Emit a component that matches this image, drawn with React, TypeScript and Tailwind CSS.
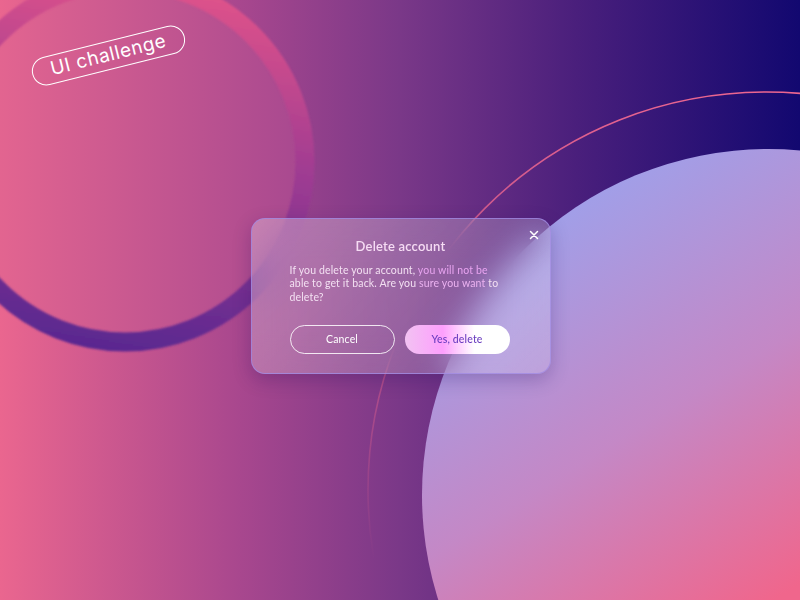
import React from "react";

function Backdrop() {
  return (
    <svg
      className="absolute inset-0"
      width={800}
      height={600}
      viewBox="0 0 800 600"
      fill="none"
    >
      <defs>
        <linearGradient id="leftFill" x1="-60" y1="0" x2="310" y2="0" gradientUnits="userSpaceOnUse">
          <stop offset="0" stopColor="#ee6a90" />
          <stop offset="1" stopColor="#a64890" />
        </linearGradient>
        <linearGradient id="leftRing" x1="180" y1="-20" x2="120" y2="350" gradientUnits="userSpaceOnUse">
          <stop offset="0" stopColor="#e2548a" />
          <stop offset="0.45" stopColor="#a03c92" />
          <stop offset="1" stopColor="#5a2890" />
        </linearGradient>
        <linearGradient id="bigFill" x1="560" y1="220" x2="790" y2="590" gradientUnits="userSpaceOnUse">
          <stop offset="0" stopColor="#a29ee7" />
          <stop offset="0.5" stopColor="#c488c6" />
          <stop offset="1" stopColor="#f0668c" />
        </linearGradient>
        <linearGradient id="thinArc" x1="0" y1="90" x2="0" y2="560" gradientUnits="userSpaceOnUse">
          <stop offset="0" stopColor="#ec6690" stopOpacity="1" />
          <stop offset="0.55" stopColor="#e8628c" stopOpacity="0.55" />
          <stop offset="1" stopColor="#e8628c" stopOpacity="0" />
        </linearGradient>
        <filter id="softEdge" x="-10%" y="-10%" width="120%" height="120%">
          <feGaussianBlur stdDeviation="1.2" />
        </filter>
      </defs>

      {/* left disc with its ring */}
      <circle cx={125} cy={162} r={172} fill="url(#leftFill)" />
      <circle
        cx={125}
        cy={162}
        r={180}
        stroke="url(#leftRing)"
        strokeWidth={19}
        filter="url(#softEdge)"
      />

      {/* thin outer arc */}
      <circle cx={766} cy={490} r={398} stroke="url(#thinArc)" strokeWidth={1.6} />

      {/* big right disc */}
      <circle cx={768} cy={495} r={346} fill="url(#bigFill)" />
    </svg>
  );
}

function CloseIcon() {
  return (
    <svg width="10" height="10" viewBox="0 0 10 10" fill="none">
      <path d="M1.5 1.5 L8.5 8.5 M8.5 1.5 L1.5 8.5" stroke="#ffffff" strokeWidth="1.5" strokeLinecap="round" />
    </svg>
  );
}

export default function App() {
  return (
    <div
      className="relative w-[800px] h-[600px] overflow-hidden bg-[linear-gradient(90deg,#ea668f_0%,#a8478e_30%,#7a3888_50%,#4a1f7c_72%,#120870_100%)]"
      style={{ fontFamily: "Lato, 'Open Sans', sans-serif" }}
    >
      <Backdrop />

      {/* tag in the upper corner */}
      <div className="absolute left-[30px] top-[41px] w-[157px] h-[29px] rotate-[-14deg] rounded-full border-[1.5px] border-white flex items-center justify-center">
        <span
          className="text-white text-[19px] leading-none tracking-[0.6px] pb-[2px]"
          style={{ fontFamily: "Inter, 'Liberation Sans', sans-serif" }}
        >
          UI challenge
        </span>
      </div>

      {/* dialog */}
      <div className="relative w-full h-full flex items-center justify-center pb-[9px] pl-[1px]">
        <div className="relative w-[300px] h-[156px] rounded-[14px] border border-[#a08ae2]/80 bg-[linear-gradient(135deg,rgba(255,255,255,0.30),rgba(255,255,255,0.14))] backdrop-blur-[18px] shadow-[0_6px_18px_rgba(40,10,90,0.25)] flex flex-col items-center pt-[19px] px-[38px]">
          <button className="absolute right-[11px] top-[11px] w-[10px] h-[10px] flex items-center justify-center">
            <CloseIcon />
          </button>

          <h2 className="text-[13px] leading-[16px] font-semibold text-[#f6dcf4] tracking-[0.2px]">
            Delete account
          </h2>

          <p className="self-stretch mt-[10px] text-[10.5px] leading-[13.5px] tracking-[0.15px] text-[#f3e0f2] whitespace-nowrap">
            If you delete your account, <span className="text-[#e8a4f0]">you will not be</span>
            <br />
            able to get it back. Are you <span className="text-[#ebb2f0]">sure you want</span> to
            <br />
            delete?
          </p>

          <div className="self-stretch mt-[21px] flex gap-[10px]">
            <button className="w-[105px] h-[29px] rounded-full border border-white/85 text-white text-[10.5px] tracking-[0.15px] flex items-center justify-center">
              Cancel
            </button>
            <button className="w-[105px] h-[29px] rounded-full bg-[linear-gradient(90deg,#f2c2f2_0%,#fd9ffd_36%,#ffffff_66%,#ffffff_100%)] text-[#6a3cbf] text-[10.5px] tracking-[0.15px] font-medium flex items-center justify-center">
              Yes, delete
            </button>
          </div>
        </div>
      </div>
    </div>
  );
}
